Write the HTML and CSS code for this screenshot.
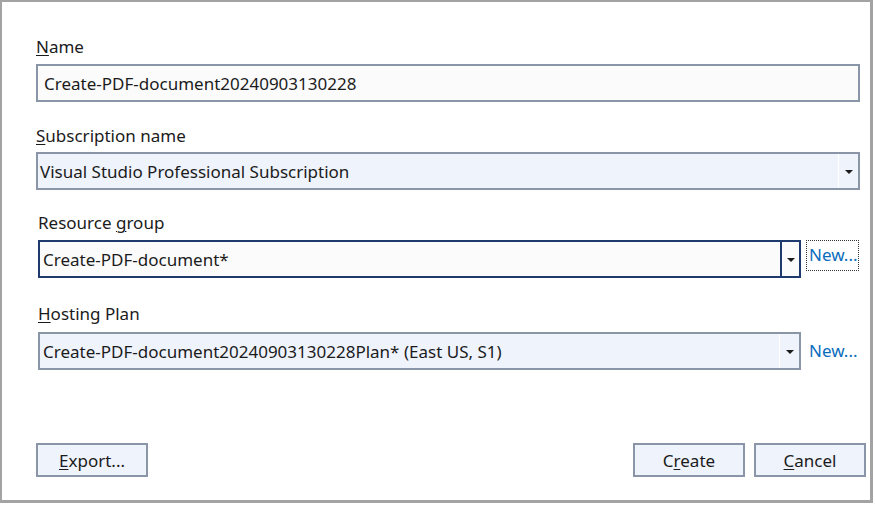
FILE: index.html
```html
<!DOCTYPE html>
<html>
<head>
<meta charset="utf-8">
<link rel="stylesheet" href="styles.css">
</head>
<body>
<div class="window">
  <div class="form">
    <div class="field field-name">
      <div class="label"><u>N</u>ame</div>
      <div class="textbox">Create-PDF-document20240903130228</div>
    </div>
    <div class="field field-sub">
      <div class="label"><u>S</u>ubscription name</div>
      <div class="combo wide">
        <span class="combo-text sub-text">Visual Studio Professional Subscription</span>
        <span class="combo-btn light"><span class="arrow"></span></span>
      </div>
    </div>
    <div class="field field-rg">
      <div class="label shift">Resource <u>g</u>roup</div>
      <div class="row">
        <div class="combo narrow focused">
          <span class="combo-text">Create-PDF-document*</span>
          <span class="combo-btn dark"><span class="arrow"></span></span>
        </div>
        <span class="link focus-link">New...</span>
      </div>
    </div>
    <div class="field field-host">
      <div class="label shift"><u>H</u>osting Plan</div>
      <div class="row">
        <div class="combo narrow">
          <span class="combo-text">Create-PDF-document20240903130228Plan* (East US, S1)</span>
          <span class="combo-btn light"><span class="arrow"></span></span>
        </div>
        <span class="link">New...</span>
      </div>
    </div>
  </div>
  <div class="footer">
    <div class="btn"><u>E</u>xport...</div>
    <div class="btn-group">
      <div class="btn">C<u>r</u>eate</div>
      <div class="btn"><u>C</u>ancel</div>
    </div>
  </div>
</div>
</body>
</html>
```

FILE: styles.css
```css
html, body {
  margin: 0;
  padding: 0;
  background: #ffffff;
}
body {
  font-family: "Noto Sans", "Open Sans", sans-serif;
  font-size: 17px;
  color: #1b1b1b;
}
u {
  text-decoration-thickness: 1px;
  text-underline-offset: 2px;
}
.window {
  box-sizing: border-box;
  width: 873px;
  height: 503px;
  border-style: solid;
  border-color: #a3a3a3;
  border-width: 2px 3px 3px 2px;
  background: #ffffff;
  display: flex;
  flex-direction: column;
  padding: 33px 0 23px 34px;
}
.form {
  display: flex;
  flex-direction: column;
}
.label {
  line-height: 24px;
  height: 24px;
  margin-bottom: 5px;
}
.label.shift {
  padding-left: 2px;
}
.field-sub { margin-top: 22px; }
.field-sub .label { margin-bottom: 4px; }
.field-rg { margin-top: 21px; }
.field-rg .label { margin-bottom: 5px; }
.field-host { margin-top: 24px; }
.field-host .label { margin-bottom: 6px; }

.textbox {
  box-sizing: border-box;
  width: 824px;
  height: 38px;
  border: 2px solid #8a95a8;
  background: #fbfbfb;
  padding: 0 6px;
  line-height: 35px;
  white-space: nowrap;
}
.row {
  display: flex;
  align-items: center;
  padding-left: 2px;
}
.combo {
  box-sizing: border-box;
  height: 38px;
  border: 2px solid #8a95a8;
  background: #eff3fb;
  display: flex;
  align-items: stretch;
}
.combo.wide { width: 824px; }
.combo.narrow { width: 763px; }
.combo.focused {
  border-color: #1f3a6e;
  background: #fbfbfb;
}
.combo-text {
  flex: 1;
  line-height: 35px;
  padding-left: 3px;
  white-space: nowrap;
  overflow: hidden;
}
.sub-text { padding-left: 2px; }
.combo-btn {
  width: 19px;
  display: flex;
  align-items: center;
  justify-content: center;
}
.combo-btn.light { border-left: 1px solid #ffffff; }
.combo-btn.dark { border-left: 2px solid #1f3a6e; width: 17px; }
.arrow {
  width: 0;
  height: 0;
  border-left: 4px solid transparent;
  border-right: 4px solid transparent;
  border-top: 4px solid #1b1b1b;
  margin-top: 1px;
}
.link {
  color: #0a6cbd;
  margin-left: 8px;
  line-height: 22px;
}
.focus-link {
  margin-left: 5px;
  padding: 4px 1px 5px 3px;
  outline: 1px dotted #333333;
  outline-offset: -1px;
  margin-top: -7px;
}
.footer {
  margin-top: auto;
  display: flex;
  justify-content: space-between;
  padding-right: 4px;
}
.btn-group {
  display: flex;
  gap: 9px;
}
.btn {
  box-sizing: border-box;
  width: 112px;
  height: 34px;
  border: 2px solid #8a95a8;
  background: #eff3fb;
  text-align: center;
  line-height: 31px;
}
```
